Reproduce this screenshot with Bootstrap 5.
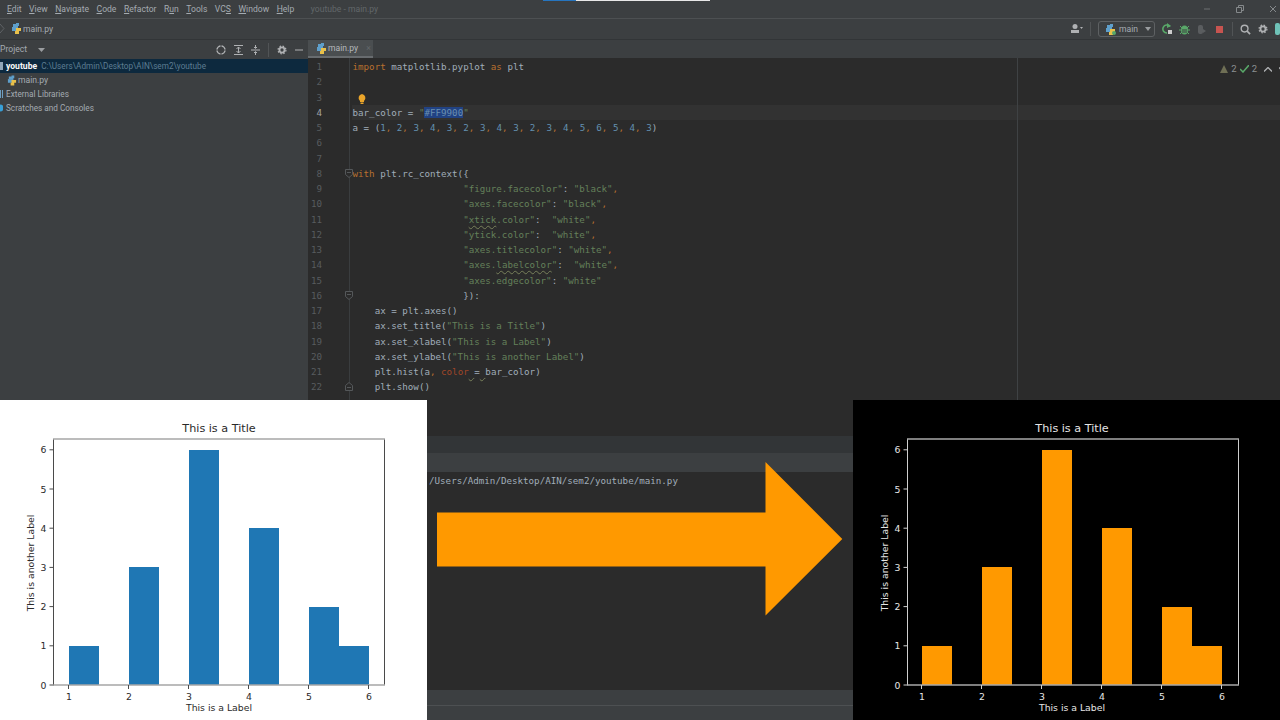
<!DOCTYPE html>
<html lang="en">
<head>
    <meta charset="UTF-8">
    <title>youtube - main.py</title>
    <link rel="stylesheet" href="https://cdn.jsdelivr.net/npm/bootstrap@5.3.0/dist/css/bootstrap.min.css">
    <style>
        body { width: 1280px; height: 720px; overflow: hidden; background: #2b2b2b; font-family: Roboto, "Liberation Sans", sans-serif; font-size: 8.6px; color: #a4abb1; }
        .ide-page { width: 1280px; height: 720px; position: relative; overflow: hidden; }
        .menu-bar { height: 19px; background: #3c3f41; border-bottom: 1px solid #4d5052; padding-left: 7px; gap: 7.5px; }
        .menu-bar u { text-underline-offset: 1px; }
        .win-title { color: #62676a; margin-left: 9px; }
        .top-progress { position: absolute; left: 543px; top: 0; width: 167px; height: 1px; background: #e8e8e8; }
        .top-progress::before { content: ""; display: block; width: 33px; height: 1px; background: #2675bf; }
        .win-btns { margin-left: auto; gap: 25px; padding-right: 3px; }
        .nav-strip { height: 21px; background: #3c3f41; border-bottom: 1px solid #323537; }
        .crumb { gap: 1px; }
        .crumb-arrow { margin-right: 5px; }
        .run-tools { margin-left: auto; gap: 7px; }
        .run-config { border: 1px solid #5e6163; border-radius: 3px; height: 16px; width: 57px; gap: 3px; padding-left: 6px; }
        .tool-sep { width: 1px; height: 14px; background: #515456; }
        .main-row { height: 360px; }
        .project-pane { width: 308px; background: #3c3f41; }
        .pane-head { height: 19px; gap: 7px; padding-right: 5px; }
        .tree-row { height: 14px; white-space: nowrap; gap: 3px; font-size: 8.2px; }
        .tree-row.active-row { background: #0d293e; }
        .tree-row b { font-size: 8.6px; }
        .tree-path { color: #5d7d92; margin-left: 1px; }
        .file-row { padding-left: 7px; gap: 1px; font-size: 8.6px; }
        .editor-col { width: 972px; background: #2b2b2b; }
        .tab-strip { height: 18px; background: #3c3f41; }
        .file-tab { width: 65px; height: 18px; background: #4a4e50; border-bottom: 2px solid #686c6f; padding-left: 8px; gap: 1px; color: #b4b8bb; }
        .file-tab i { font-style: normal; color: #62676a; margin-left: 7px; }
        .code-area { position: relative; flex: 1; overflow: hidden; padding-top: 1px; }
        .code-row { height: 15.25px; line-height: 15.25px; display: flex; font-family: "DejaVu Sans Mono", "Liberation Mono", monospace; font-size: 9.2px; white-space: pre; color: #a0adb9; }
        .code-row .ln { width: 14px; text-align: right; color: #585c5f; }
        .code-row .cd { margin-left: 30px; padding-left: 0.5px; flex: 1; }
        .caret-row .cd { background: #323232; }
        .caret-row .ln { color: #a4a3a3; }
        .kw { color: #b8702f; } .st { color: #64805a; } .nu { color: #6390b0; } .pa { color: #a04628; }
        .sel { background: #214283; color: #6a8fb0; }
        .wavy { text-decoration: underline wavy #77805a 1px; text-underline-offset: 2px; }
        .gutter-line { position: absolute; left: 41px; top: 0; bottom: 0; width: 1px; background: #3a3d3f; }
        .margin-line { position: absolute; left: 709px; top: 0; bottom: 0; width: 1px; background: #3f4244; }
        .fold-mark { position: absolute; left: 37px; }
        .bulb { position: absolute; left: 50px; top: 36px; width: 8px; height: 10px; }
        .inspect-bar { position: absolute; right: -7px; top: 4px; gap: 3px; color: #8c9092; font-size: 9.5px; }
        .run-spacer { height: 36px; }
        .run-head { height: 17px; background: #323537; }
        .run-head2 { height: 19px; background: #3c3f41; }
        .run-path { height: 218px; padding: 2px 0 0 429px; font-family: "DejaVu Sans Mono", "Liberation Mono", monospace; font-size: 9.2px; color: #a0adb9; }
        .status-a { height: 15px; background: #3c3f41; }
        .status-b { height: 15px; background: #3c3f41; border-top: 1px solid #4d5052; }
        .plot-win { position: absolute; top: 400px; height: 320px; }
        .plot-light { left: 0; width: 427px; background: #fff; }
        .plot-dark { left: 853px; width: 427px; background: #000; }
        .plot-win svg { display: block; font-family: "DejaVu Sans", sans-serif; }
        .big-arrow { position: absolute; left: 437px; top: 462px; }
    </style>
</head>
<body>
<div class="ide-page">
    <svg width="0" height="0" class="d-block">
        <symbol id="pyIcon" viewBox="0 0 11 11"><path d="M5 0h3v3H5zM2 1h5v3H2z" fill="#5e9fcb"/><path d="M1 4h6v4H1z" fill="#5e9fcb"/><path d="M5 5h5v3H5zM4 8h4v3H4z" fill="#e8c04a"/></symbol>
        <symbol id="gearIcon" viewBox="0 0 11 11"><circle cx="5.500" cy="5.500" r="2.800" fill="none" stroke="#afb1b3" stroke-width="2"/><circle cx="5.500" cy="5.500" r="4.300" fill="none" stroke="#afb1b3" stroke-width="1.400" stroke-dasharray="1.700 1.700"/></symbol>
    </svg>
    <div class="menu-bar d-flex align-items-center">
        <span><u>E</u>dit</span><span><u>V</u>iew</span><span><u>N</u>avigate</span><span><u>C</u>ode</span><span><u>R</u>efactor</span><span>R<u>u</u>n</span><span><u>T</u>ools</span><span>VC<u>S</u></span><span><u>W</u>indow</span><span><u>H</u>elp</span>
        <span class="win-title">youtube - main.py</span>
        <div class="win-btns d-flex align-items-center">
            <svg width="8" height="8"><path d="M1 4h6" stroke="#6c7072"/></svg>
            <svg width="8" height="8"><path d="M.5 2.500h5v5h-5zM2.500 2V.5h5v5H6" stroke="#85898b" fill="none"/></svg>
            <svg width="8" height="8"><path d="M1 1l6 6M7 1l-6 6" stroke="#85898b"/></svg>
        </div>
    </div>
    <div class="top-progress"></div>
    <div class="nav-strip d-flex align-items-center">
        <div class="crumb d-flex align-items-center">
            <svg class="crumb-arrow" width="5" height="9"><path d="M0 0l4 4.500L0 9" fill="none" stroke="#5f6366"/></svg>
            <svg width="11" height="11"><use href="#pyIcon"/></svg>
            <span>main.py</span>
        </div>
        <div class="run-tools d-flex align-items-center">
            <svg width="12" height="10" viewBox="0 0 12 10"><circle cx="4" cy="2.500" r="2.500" fill="#afb1b3"/><path d="M0 9V6h8v3zM9 3l1.500 2L12 3z" fill="#afb1b3"/></svg>
            <span class="tool-sep"></span>
            <div class="run-config d-flex align-items-center">
                <svg width="11" height="11" viewBox="0 0 11 11"><use href="#pyIcon"/><circle cx="9" cy="9" r="2" fill="#59a869"/></svg>
                <span>main</span>
                <svg class="ms-1" width="6" height="4"><path d="M0 0h6L3 4z" fill="#9a9da0"/></svg>
            </div>
            <svg width="10" height="12" viewBox="0 0 10 12"><path d="M8 3.500A4 4 0 1 0 5 10" fill="none" stroke="#59a869" stroke-width="1.600"/><path d="M5 0l4 3-4 2z" fill="#59a869"/><rect x="6" y="7" width="4" height="4" fill="#ccc"/></svg>
            <svg width="11" height="12" viewBox="0 0 11 12"><ellipse cx="5.500" cy="7" rx="3.500" ry="4.500" fill="#59a869"/><path d="M1 3l2 2M10 3L8 5M0 7h2M9 7h2M1 11l2-2M10 11L8 9" stroke="#59a869"/><path d="M3 7h5M3 9h5" stroke="#3c3f41"/></svg>
            <svg width="10" height="11" viewBox="0 0 10 11"><rect x="1" y="1" width="5" height="9" rx="2" fill="#5a5d5f"/><path d="M6 5l3 2-3 2z" fill="#5a5d5f"/></svg>
            <svg width="11" height="11"><rect x="2" y="2" width="7" height="7" fill="#c75450"/></svg>
            <span class="tool-sep"></span>
            <svg width="11" height="11" viewBox="0 0 12 12"><circle cx="5" cy="5" r="3.700" fill="none" stroke="#afb1b3" stroke-width="1.500"/><path d="M7.500 7.500L11 11" stroke="#afb1b3" stroke-width="1.800"/></svg>
            <svg width="10" height="10"><use href="#gearIcon"/></svg>
            <svg width="5" height="12"><rect width="5" height="12" rx="2" fill="#6fc3b8"/></svg>
        </div>
    </div>
    <div class="main-row d-flex">
        <div class="project-pane">
            <div class="pane-head d-flex align-items-center">
                <span>Project</span>
                <svg class="ms-1" width="7" height="4"><path d="M0 0h7L3.500 4z" fill="#9a9da0"/></svg>
                <div class="ms-auto d-flex align-items-center gap-2">
                    <svg width="10" height="10" viewBox="0 0 10 10"><circle cx="5" cy="5" r="4" fill="none" stroke="#afb1b3" stroke-width="1.500"/><path d="M5 0v10M0 5h10" stroke="#3c3f41"/></svg>
                    <svg width="9" height="10" viewBox="0 0 9 10"><path d="M0 .5h9M0 9.500h9" stroke="#afb1b3"/><path d="M4.500 2v6M2.500 4l2-2 2 2M2.500 6l2 2 2-2" stroke="#afb1b3" fill="none"/></svg>
                    <svg width="9" height="10" viewBox="0 0 9 10"><path d="M0 5h9" stroke="#afb1b3"/><path d="M4.500 0v3M3 2l1.500 1.500L6 2M4.500 10V7M3 8l1.500-1.500L6 8" stroke="#afb1b3" fill="none"/></svg>
                    <span class="tool-sep"></span>
                    <svg width="10" height="10"><use href="#gearIcon"/></svg>
                    <svg width="8" height="2"><path d="M0 1h8" stroke="#afb1b3"/></svg>
                </div>
            </div>
            <div class="tree-row active-row d-flex align-items-center">
                <svg width="3" height="8"><rect width="3" height="8" fill="#8fa6b8"/></svg>
                <b class="text-light">youtube</b><span class="tree-path">C:\Users\Admin\Desktop\AIN\sem2\youtube</span>
            </div>
            <div class="tree-row file-row d-flex align-items-center">
                <svg width="10" height="11"><use href="#pyIcon"/></svg>
                <span>main.py</span>
            </div>
            <div class="tree-row d-flex align-items-center">
                <svg width="3" height="8"><path d="M0 0h1v8H0zM2 0h1v8H2z" fill="#6d9dc0"/></svg>
                <span>External Libraries</span>
            </div>
            <div class="tree-row d-flex align-items-center">
                <svg width="3" height="8"><circle cx="0" cy="4" r="3.500" fill="#389fd6"/></svg>
                <span>Scratches and Consoles</span>
            </div>
        </div>
        <div class="editor-col d-flex flex-column">
            <div class="tab-strip d-flex">
                <div class="file-tab d-flex align-items-center">
                    <svg width="11" height="11"><use href="#pyIcon"/></svg>
                    <span>main.py</span><i>×</i>
                </div>
            </div>
            <div class="code-area">
                <div class="gutter-line"></div>
                <div class="margin-line"></div>
                <div class="inspect-bar d-flex align-items-center">
                    <svg width="8" height="8"><path d="M4 0l4 8H0z" fill="#6f6f55"/></svg><span>2</span>
                    <svg width="9" height="8"><path d="M0 4l3 3 6-7" fill="none" stroke="#59a869" stroke-width="1.500"/></svg><span>2</span>
                    <svg class="ms-1" width="8" height="5"><path d="M0 4.500l4-4 4 4" fill="none" stroke="#afb1b3" stroke-width="1.300"/></svg>
                    <svg class="ms-1" width="8" height="5"><path d="M0 .5l4 4 4-4" fill="none" stroke="#afb1b3" stroke-width="1.300"/></svg>
                </div>
                <svg class="bulb" viewBox="0 0 8 10"><path d="M4 0a4 4 0 0 1 2 7v1H2V7a4 4 0 0 1 2-7z" fill="#eaa52a"/><rect x="2.500" y="8.500" width="3" height="1.500" fill="#eaa52a"/></svg>
                <svg class="fold-mark" style="top:111px" width="8" height="9"><path d="M.5.500h7v5l-3.500 3-3.500-3zM2 3.500h4" fill="#2b2b2b" stroke="#55585a"/></svg>
                <svg class="fold-mark" style="top:233px" width="8" height="9"><path d="M.5.500h7v5l-3.500 3-3.500-3zM2 3.500h4" fill="#2b2b2b" stroke="#55585a"/></svg>
                <svg class="fold-mark" style="top:324px" width="8" height="9"><path d="M.5 8.500h7v-5l-3.500-3-3.500 3zM2 5.500h4" fill="#2b2b2b" stroke="#55585a"/></svg>
                <div id="code"></div>
            </div>
        </div>
    </div>
    <div class="run-area">
        <div class="run-spacer"></div>
        <div class="run-head"></div>
        <div class="run-head2"></div>
        <div class="run-path">/Users/Admin/Desktop/AIN/sem2/youtube/main.py</div>
        <div class="status-a"></div>
        <div class="status-b"></div>
    </div>

    <div class="plot-win plot-light" id="plotLight"></div>
    <div class="plot-win plot-dark" id="plotDark"></div>

    <svg class="big-arrow" width="406" height="154" viewBox="0 0 406 154">
        <path d="M0 50.500H328.500V0L405.300 77 328.500 153.500V104.500H0z" fill="#ff9900"/>
    </svg>
</div>

<script>
    // editor lines, html per line, line number comes from the index
    const pad = " ".repeat(20);
    const lines = [
        '<span class="kw">import</span> matplotlib.pyplot <span class="kw">as</span> plt',
        '', '',
        'bar_color = <span class="st">"<span class="sel">#FF9900</span>"</span>',
        'a = (' + [1,2,3,4,3,2,3,4,3,2,3,4,5,6,5,4,3].map(n => '<span class="nu">' + n + '</span>').join('<span class="kw">, </span>') + ')',
        '', '',
        '<span class="kw">with</span> plt.rc_context({',
        pad + '<span class="st">"figure.facecolor"</span>: <span class="st">"black"</span><span class="kw">,</span>',
        pad + '<span class="st">"axes.facecolor"</span>: <span class="st">"black"</span><span class="kw">,</span>',
        pad + '<span class="st">"<span class="wavy">xtick</span>.color"</span>:  <span class="st">"white"</span><span class="kw">,</span>',
        pad + '<span class="st">"ytick.color"</span>:  <span class="st">"white"</span><span class="kw">,</span>',
        pad + '<span class="st">"axes.titlecolor"</span>: <span class="st">"white"</span><span class="kw">,</span>',
        pad + '<span class="st">"axes.<span class="wavy">labelcolor</span>"</span>:  <span class="st">"white"</span><span class="kw">,</span>',
        pad + '<span class="st">"axes.edgecolor"</span>: <span class="st">"white"</span>',
        pad + '}):',
        '    ax = plt.axes()',
        '    ax.set_title(<span class="st">"This is a Title"</span>)',
        '    ax.set_xlabel(<span class="st">"This is a Label"</span>)',
        '    ax.set_ylabel(<span class="st">"This is another Label"</span>)',
        '    plt.hist(a<span class="kw">, </span><span class="pa">color</span><span class="wavy"> </span>=<span class="wavy"> </span>bar_color)',
        '    plt.show()'
    ];
    document.querySelector('#code').innerHTML = lines.map((html, i) =>
        `<div class="code-row ${i == 3 ? 'caret-row' : ''}"><span class="ln">${i + 1}</span><span class="cd">${html}</span></div>`
    ).join('');

    // the two histograms share geometry, only colours differ
    function renderPlot(box, opts) {
        const left = opts.x0, right = left + 331, top = 39, base = 285;
        const xAt = v => 69 + (v - 1) * 60;
        const yAt = v => base - v * 39.2;
        const bars = [[1, 1.5, 1], [2, 2.5, 3], [3, 3.5, 6], [4, 4.5, 4], [5, 5.5, 2], [5.5, 6, 1]];
        let s = `<svg width="427" height="320" viewBox="0 0 427 320">`;
        for (const b of bars) {
            s += `<rect x="${xAt(b[0])}" y="${yAt(b[2])}" width="${xAt(b[1]) - xAt(b[0])}" height="${base - yAt(b[2])}" fill="${opts.bar}" shape-rendering="crispEdges"/>`;
        }
        s += `<path d="M${left} ${top}V${base}M${right} ${top}V${base}" stroke="${opts.side}"/>`;
        s += `<path d="M${left - .5} ${top}H${right + .5}M${left - .5} ${base}H${right + .5}" stroke="${opts.flat}" stroke-width="1.600"/>`;
        for (let v = 0; v <= 6; v++) {
            s += `<path d="M${left - 4} ${yAt(v)}H${left}" stroke="${opts.side}"/>`;
            s += `<text x="${left - 7}" y="${yAt(v) + 3.500}" text-anchor="end" font-size="9.300" fill="${opts.text}">${v}</text>`;
        }
        for (let v = 1; v <= 6; v++) {
            s += `<path d="M${xAt(v) - .5} ${base}v4" stroke="${opts.side}"/>`;
            s += `<text x="${xAt(v)}" y="${base + 14.500}" text-anchor="middle" font-size="9.300" fill="${opts.text}">${v}</text>`;
        }
        s += `<text x="219" y="32" text-anchor="middle" font-size="11.200" fill="${opts.text}">This is a Title</text>`;
        s += `<text x="219" y="311" text-anchor="middle" font-size="9.300" fill="${opts.text}">This is a Label</text>`;
        s += `<text transform="translate(${left - 19.5} 163) rotate(-90)" text-anchor="middle" font-size="9.300" fill="${opts.text}">This is another Label</text>`;
        s += `</svg>`;
        document.querySelector(box).innerHTML = s;
    }
    renderPlot('#plotLight', { x0: 53.5, bar: '#1f77b4', side: '#4a4a4a', flat: '#a6a6a6', text: '#2a2a2a' });
    renderPlot('#plotDark', { x0: 54.5, bar: '#ff9900', side: '#cfcfcf', flat: '#a8a8a8', text: '#e6e6e6' });
</script>
<script src="https://cdn.jsdelivr.net/npm/bootstrap@5.3.0/dist/js/bootstrap.bundle.min.js"></script>
</body>
</html>
